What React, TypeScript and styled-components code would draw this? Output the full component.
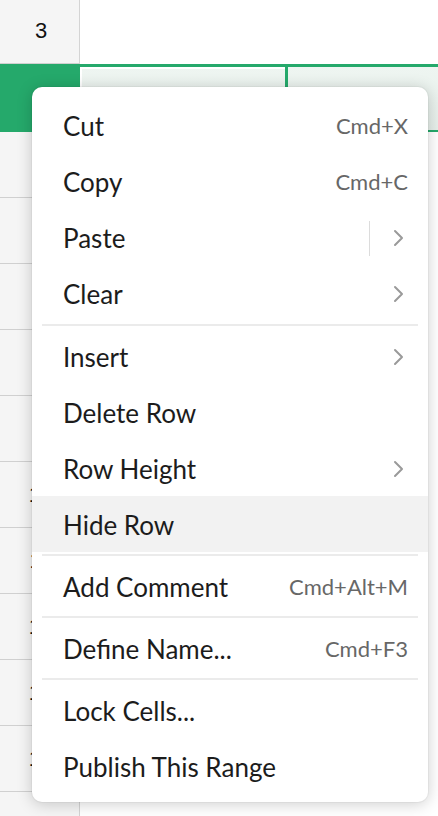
import React from "react";
import styled, { createGlobalStyle } from "styled-components";

const Global = createGlobalStyle`
  html, body { margin: 0; padding: 0; background: #ffffff; }
  body { font-family: "Lato", "Noto Sans", sans-serif; }
  * { box-sizing: border-box; }
`;

const Page = styled.div`
  position: relative;
  width: 438px;
  height: 816px;
  overflow: hidden;
  background: #ffffff;
`;

const Sheet = styled.div`
  display: flex;
  flex-direction: column;
  margin-top: -2px;
`;

const Row = styled.div<{ $selected?: boolean }>`
  display: flex;
  height: ${(p) => (p.$selected ? 68 : 66)}px;
  flex-shrink: 0;
`;

const RowHeader = styled.div<{ $selected?: boolean }>`
  width: 80px;
  flex-shrink: 0;
  display: flex;
  align-items: center;
  justify-content: center;
  padding-left: 3px;
  color: ${(p) => (p.$selected ? "#ffffff" : "#111111")};
  background: ${(p) => (p.$selected ? "#25a96b" : "#f5f5f5")};
  border-right: 1px solid ${(p) => (p.$selected ? "#25a96b" : "#d4d4d4")};
  border-bottom: 1px solid ${(p) => (p.$selected ? "#25a96b" : "#d0d0d0")};
`;

const RowNumber = styled.span`
  font-family: "Liberation Sans", Arial, sans-serif;
  font-size: 22px;
  line-height: 1;
  color: inherit;
`;

const Cells = styled.div<{ $selected?: boolean }>`
  flex: 1;
  display: flex;
  background: #ffffff;
  border-top: ${(p) => (p.$selected ? "3px solid #25a96b" : "none")};
  border-bottom: ${(p) => (p.$selected ? "2px solid #25a96b" : "none")};
`;

const Cell = styled.div<{ $active?: boolean; $selected?: boolean }>`
  width: ${(p) => (p.$active ? 208 : 160)}px;
  flex-shrink: 0;
  background: ${(p) =>
    p.$selected ? "linear-gradient(180deg, #eef5f1 0%, #e6efea 100%)" : "#ffffff"};
  border-right: ${(p) => (p.$active ? "3px solid #25a96b" : "none")};
  box-shadow: ${(p) => (p.$active ? "inset 2px 2px 0 #ffffff" : "none")};
`;

const Menu = styled.div`
  position: absolute;
  left: 32px;
  top: 87px;
  width: 396px;
  background: #ffffff;
  border-radius: 10px;
  box-shadow: 0 2px 16px rgba(0, 0, 0, 0.2), 0 0 0 1px rgba(0, 0, 0, 0.03);
  padding: 10px 0 8px;
  display: flex;
  flex-direction: column;
`;

const Item = styled.div<{ $hover?: boolean }>`
  height: 56px;
  display: flex;
  align-items: center;
  padding: 2px 20px 0 31px;
  background: ${(p) => (p.$hover ? "#f2f2f2" : "transparent")};
`;

const Label = styled.span`
  flex: 1;
  font-size: 26px;
  line-height: 1;
  color: #1c1c1c;
  white-space: nowrap;
`;

const Shortcut = styled.span`
  font-size: 22px;
  line-height: 1;
  color: #676767;
  white-space: nowrap;
`;

const Divider = styled.span`
  width: 1px;
  height: 35px;
  background: #dcdcdc;
  margin-right: 23px;
`;

const Chevron = styled.svg`
  width: 11px;
  height: 18px;
  margin-right: 4px;
  flex-shrink: 0;
`;

const Separator = styled.div<{ $first?: boolean }>`
  height: 2px;
  background: #ebebeb;
  margin: ${(p) => (p.$first ? "3px 10px 2px" : "2px 10px 2px")};
`;

type Entry =
  | { kind: "sep"; first?: boolean }
  | { kind: "item"; label: string; shortcut?: string; sub?: boolean; split?: boolean; hover?: boolean };

const entries: Entry[] = [
  { kind: "item", label: "Cut", shortcut: "Cmd+X" },
  { kind: "item", label: "Copy", shortcut: "Cmd+C" },
  { kind: "item", label: "Paste", sub: true, split: true },
  { kind: "item", label: "Clear", sub: true },
  { kind: "sep", first: true },
  { kind: "item", label: "Insert", sub: true },
  { kind: "item", label: "Delete Row" },
  { kind: "item", label: "Row Height", sub: true },
  { kind: "item", label: "Hide Row", hover: true },
  { kind: "sep" },
  { kind: "item", label: "Add Comment", shortcut: "Cmd+Alt+M" },
  { kind: "sep" },
  { kind: "item", label: "Define Name...", shortcut: "Cmd+F3" },
  { kind: "sep" },
  { kind: "item", label: "Lock Cells..." },
  { kind: "item", label: "Publish This Range" },
];

const rows = [3, 4, 5, 6, 7, 8, 9, 10, 11, 12, 13, 14, 15];

const ChevronIcon = () => (
  <Chevron viewBox="0 0 11 18">
    <polyline points="2,2 9,9 2,16" fill="none" stroke="#9a9a9a" strokeWidth="2" strokeLinecap="round" strokeLinejoin="round" />
  </Chevron>
);

export default function App() {
  return (
    <Page>
      <Global />
      <Sheet>
        {rows.map((n) => {
          const sel = n === 4;
          return (
            <Row key={n} $selected={sel}>
              <RowHeader $selected={sel}>{!sel && <RowNumber>{n}</RowNumber>}</RowHeader>
              <Cells $selected={sel}>
                <Cell $active={sel} $selected={sel} />
                <Cell $selected={sel} />
              </Cells>
            </Row>
          );
        })}
      </Sheet>
      <Menu>
        {entries.map((e, i) =>
          e.kind === "sep" ? (
            <Separator key={i} $first={e.first} />
          ) : (
            <Item key={i} $hover={e.hover}>
              <Label>{e.label}</Label>
              {e.shortcut && <Shortcut>{e.shortcut}</Shortcut>}
              {e.split && <Divider />}
              {e.sub && <ChevronIcon />}
            </Item>
          )
        )}
      </Menu>
    </Page>
  );
}
